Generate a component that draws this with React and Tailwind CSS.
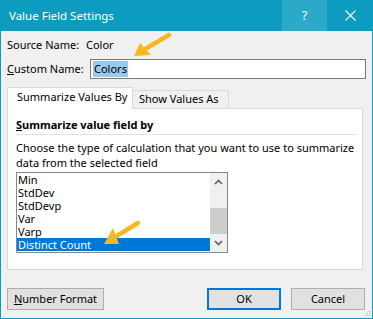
import React from 'react';

// list items shown in the summarize box
const ITEMS = ['Min', 'StdDev', 'StdDevp', 'Var', 'Varp', 'Distinct Count'];

const YellowArrow = ({ className, tail, tip, wingA, wingB }) => (
  <svg className={className} width="373" height="319" viewBox="0 0 373 319">
    <line x1={tail[0]} y1={tail[1]} x2={tip[0] + 6} y2={tip[1] - 4} stroke="#f6b821" strokeWidth="4.5" strokeLinecap="round" />
    <polygon points={`${tip[0]},${tip[1]} ${wingA[0]},${wingA[1]} ${wingB[0]},${wingB[1]}`} fill="#f6b821" />
  </svg>
);

const Chevron = ({ down }) => (
  <svg width="9" height="6" viewBox="0 0 9 6">
    <path d={down ? 'M1 1 L4.5 4.5 L8 1' : 'M1 5 L4.5 1.5 L8 5'} fill="none" stroke="#606060" strokeWidth="1.6" />
  </svg>
);

const App = () => {
  return (
    <div
      className="relative w-[373px] h-[319px] flex flex-col bg-[#f0f0f0] border-x border-b border-[#0b9cbf] text-[11px] text-black overflow-hidden whitespace-nowrap"
      style={{ fontFamily: '"Noto Sans", "Segoe UI", sans-serif' }}
    >
      {/* title bar */}
      <div className="h-[31px] shrink-0 flex items-stretch bg-[#0b9cbf] text-white -mx-px">
        <div className="flex-1 flex items-center pl-[9px] text-[11.5px]">Value Field Settings</div>
        <div className="w-[45px] flex items-center justify-center bg-[#2aa9c8] text-[13px]">?</div>
        <div className="w-[46px] flex items-center justify-center">
          <svg width="11" height="11" viewBox="0 0 11 11">
            <path d="M0.5 0.5 L10.5 10.5 M10.5 0.5 L0.5 10.5" stroke="white" strokeWidth="1.1" />
          </svg>
        </div>
      </div>

      <div className="flex flex-col px-[6px] shrink-0">
        <div className="mt-[6px] h-[16px] shrink-0 flex items-center">
          <span className="w-[79px] shrink-0">Source Name:</span>
          <span>Color</span>
        </div>

        <div className="mt-[6px] h-[20px] shrink-0 flex items-center">
          <span className="w-[83px] shrink-0"><span className="underline">C</span>ustom Name:</span>
          <div className="w-[276px] h-[20px] shrink-0 bg-white border border-[#7a7a7a] flex items-center pl-[2px]">
            <span className="bg-[#99c9ef] leading-[16px] px-px">Colors</span>
          </div>
        </div>

        {/* tabs */}
        <div className="mt-[8px] flex items-end h-[22px] shrink-0 relative z-10">
          <div className="h-[22px] w-[126px] shrink-0 bg-white border border-b-0 border-[#d9d9d9] flex items-center pl-[9px] pb-[2px]">
            Summarize Values By
          </div>
          <div className="h-[18px] mb-px w-[96px] shrink-0 bg-[#f0f0f0] border border-l-0 border-b-0 border-[#d9d9d9] flex items-center pl-[6px]">
            Show Values As
          </div>
        </div>

        <div className="-mt-px h-[162px] w-[356px] shrink-0 bg-white border border-[#d9d9d9] pl-[8px] pr-[5px] pt-[8px]">
          <div className="h-[16px] flex items-center font-bold">
            <span><span className="underline">S</span>ummarize value field by</span>
          </div>
          <div className="mt-px h-px bg-[#e3e3e3]" />
          <div className="mt-[5px] leading-[15px]">
            <div>Choose the type of calculation that you want to use to summarize</div>
            <div>data from the selected field</div>
          </div>
          <div className="mt-[2px] w-[212px] h-[81px] border border-[#828790] flex">
            <div className="flex-1 flex flex-col">
              {ITEMS.map((item) => (
                <div
                  key={item}
                  className={
                    item === 'Distinct Count'
                      ? 'h-[13px] leading-[13px] pl-[1px] bg-[#0078d7] text-white'
                      : 'h-[13px] leading-[13px] pl-[1px]'
                  }
                >
                  {item}
                </div>
              ))}
            </div>
            <div className="w-[17px] bg-[#f0f0f0] flex flex-col">
              <div className="h-[17px] flex items-center justify-center"><Chevron /></div>
              <div className="h-[18px]" />
              <div className="h-[26px] bg-[#cdcdcd]" />
              <div className="h-[17px] flex items-center justify-center"><Chevron down /></div>
            </div>
          </div>
        </div>

        {/* buttons */}
        <div className="mt-[18px] flex items-center h-[22px] shrink-0">
          <button className="w-[97px] h-[22px] bg-[#e1e1e1] border border-[#adadad]">
            <span className="underline">N</span>umber Format
          </button>
          <div className="flex-1" />
          <button className="w-[74px] h-[22px] bg-[#e1e1e1] border-2 border-[#0078d7]">OK</button>
          <button className="ml-[10px] mr-[1px] w-[74px] h-[22px] bg-[#e1e1e1] border border-[#adadad]">Cancel</button>
        </div>
      </div>

      {/* resize grip */}
      <svg className="absolute right-[1px] bottom-[1px]" width="8" height="8" viewBox="0 0 8 8">
        <rect x="6" y="2" width="1" height="1" fill="#b0b0b0" />
        <rect x="4" y="4" width="1" height="1" fill="#b0b0b0" />
        <rect x="6" y="4" width="1" height="1" fill="#b0b0b0" />
        <rect x="2" y="6" width="1" height="1" fill="#b0b0b0" />
        <rect x="4" y="6" width="1" height="1" fill="#b0b0b0" />
        <rect x="6" y="6" width="1" height="1" fill="#b0b0b0" />
      </svg>

      {/* callout arrows */}
      <YellowArrow
        className="absolute left-0 top-0 pointer-events-none"
        tail={[168, 35]}
        tip={[133, 56]}
        wingA={[139, 43]}
        wingB={[150, 55]}
      />
      <YellowArrow
        className="absolute left-0 top-0 pointer-events-none"
        tail={[137, 223]}
        tip={[103, 244]}
        wingA={[112, 228]}
        wingB={[118, 244]}
      />
    </div>
  );
};

export default App;
